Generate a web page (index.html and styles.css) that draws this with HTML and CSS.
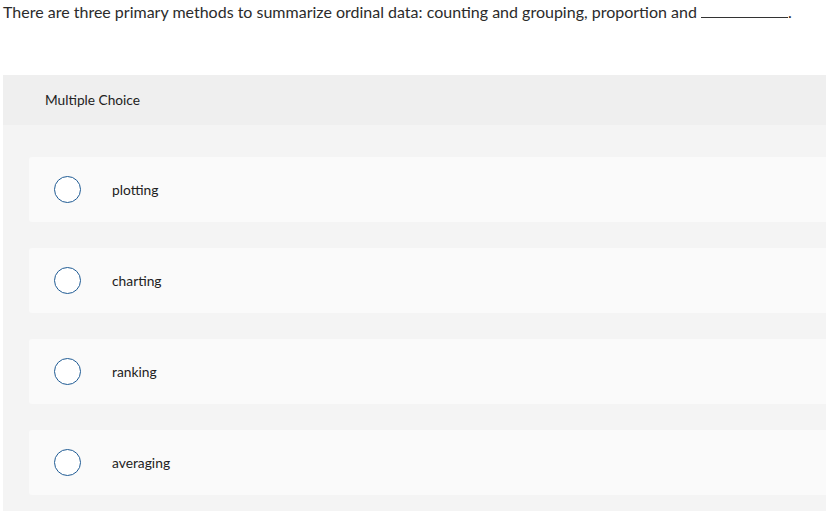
FILE: index.html
```html
<!DOCTYPE html>
<html>
<head>
<meta charset="utf-8">
<link rel="stylesheet" href="styles.css">
</head>
<body>
<p class="question">There are three primary methods to summarize ordinal data: counting and grouping, proportion and <span class="blank"></span>.</p>
<section class="panel">
  <div class="panel-head">Multiple Choice</div>
  <div class="panel-body">
    <label class="option"><span class="radio"></span><span class="opt-text">plotting</span></label>
    <label class="option"><span class="radio"></span><span class="opt-text">charting</span></label>
    <label class="option"><span class="radio"></span><span class="opt-text">ranking</span></label>
    <label class="option"><span class="radio"></span><span class="opt-text">averaging</span></label>
  </div>
</section>
</body>
</html>
```
FILE: styles.css
```css
html, body {
  margin: 0;
  padding: 0;
  overflow: hidden;
  background: #ffffff;
  font-family: "Lato", "Open Sans", "Liberation Sans", sans-serif;
  color: #222;
}
.question {
  margin: 0;
  padding: 2px 0 1px 3px;
  font-size: 16px;
  line-height: 20px;
  color: #2b2b2b;
  white-space: nowrap;
}
.blank {
  display: inline-block;
  width: 87px;
  border-bottom: 1px solid #333;
  vertical-align: baseline;
}
.panel {
  margin: 52px -20px 0 3px;
  background: #f4f4f4;
}
.panel-head {
  height: 50px;
  box-sizing: border-box;
  padding-bottom: 2px;
  background: #efefef;
  display: flex;
  align-items: center;
  padding-left: 42px;
  font-size: 13.7px;
  color: #222;
}
.panel-body {
  padding: 32px 0 20px 26px;
  display: flex;
  flex-direction: column;
  gap: 26px;
}
.option {
  height: 65px;
  background: #fafafa;
  border-radius: 3px;
  display: flex;
  align-items: center;
  padding-left: 25px;
}
.radio {
  width: 25px;
  height: 25px;
  border: 1.5px solid #1f5b94;
  border-radius: 50%;
  background: #fff;
  flex: none;
}
.opt-text {
  margin-left: 31px;
  font-size: 13.8px;
  color: #222;
}
```
